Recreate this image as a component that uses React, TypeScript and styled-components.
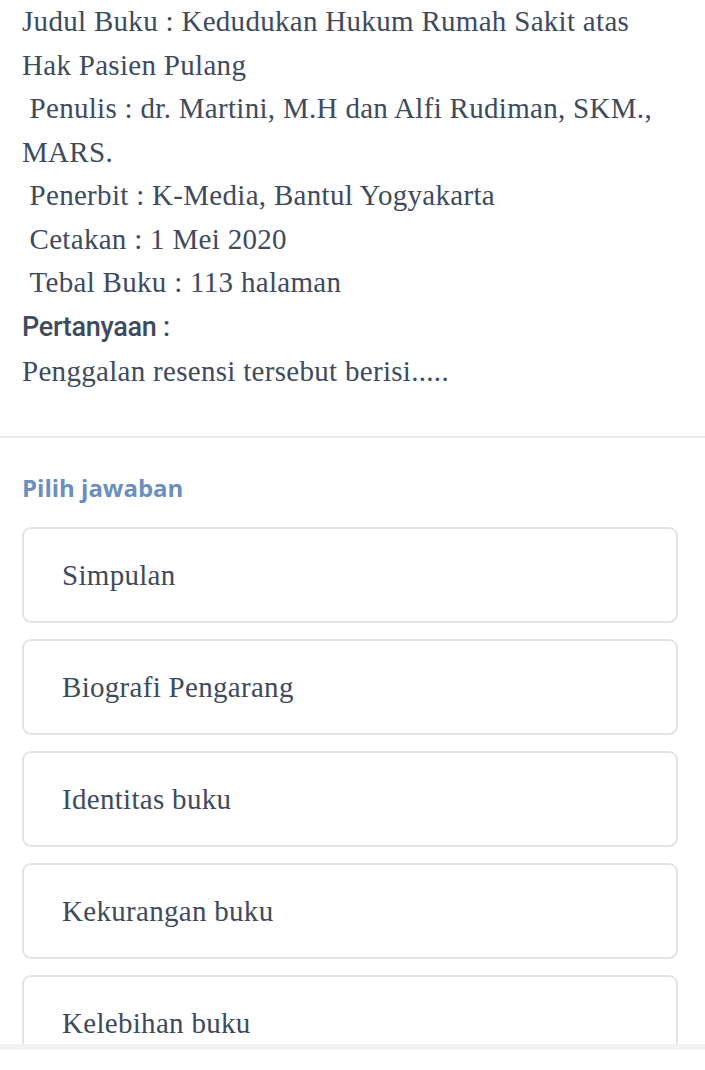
import React from "react"
import styled, { createGlobalStyle } from "styled-components"

const GlobalStyle = createGlobalStyle`
  html, body {
    margin: 0;
    padding: 0;
    background: #fff;
  }
`

const bookLines = [
  "Judul Buku : Kedudukan Hukum Rumah Sakit atas Hak Pasien Pulang",
  "\u00a0Penulis : dr. Martini, M.H dan Alfi Rudiman, SKM., MARS.",
  "\u00a0Penerbit : K-Media, Bantul Yogyakarta",
  "\u00a0Cetakan : 1 Mei 2020",
  "\u00a0Tebal Buku : 113 halaman",
]

const choices = [
  "Simpulan",
  "Biografi Pengarang",
  "Identitas buku",
  "Kekurangan buku",
  "Kelebihan buku",
]

const App = () => {
  return (
    <>
      <GlobalStyle />
      <Page>
        <Question>
          {bookLines.map(line => (
            <Line key={line}>{line}</Line>
          ))}
          <Label>Pertanyaan :</Label>
          <Line>Penggalan resensi tersebut berisi.....</Line>
        </Question>
        <Divider />
        <Answers>
          <AnswersTitle>Pilih jawaban</AnswersTitle>
          <ChoiceList>
            {choices.map(choice => (
              <Choice key={choice}>{choice}</Choice>
            ))}
          </ChoiceList>
        </Answers>
      </Page>
      <BottomBar />
    </>
  )
}

export default App

const Page = styled.div`
  padding-bottom: 80px;
  color: #3e4a5d;
`
const Question = styled.div`
  padding: 0 43px 43px 22px;
`
const Line = styled.p`
  margin: 0;
  font-family: "Liberation Serif", "DejaVu Serif", serif;
  font-size: 29px;
  line-height: 43.5px;
  letter-spacing: 0.3px;
`
const Label = styled.p`
  margin: 0;
  font-family: Roboto, "Liberation Sans", sans-serif;
  font-weight: 500;
  font-size: 27px;
  line-height: 45px;
  letter-spacing: -0.3px;
  color: #3e4a5d;
`
const Divider = styled.hr`
  margin: 0;
  border: 0;
  height: 2px;
  background: #e8e9eb;
`
const Answers = styled.div`
  padding: 29px 27px 0 22px;
`
const AnswersTitle = styled.h3`
  margin: 0 0 18px;
  font-family: "Open Sans", sans-serif;
  font-weight: 700;
  font-size: 24px;
  line-height: 42px;
  color: #6b8ebe;
`
const ChoiceList = styled.div`
  display: flex;
  flex-direction: column;
  gap: 16px;
`
const Choice = styled.div`
  display: flex;
  align-items: center;
  height: 96px;
  box-sizing: border-box;
  padding: 0 38px;
  border: 2px solid #e2e3e5;
  border-radius: 9px;
  background: #fff;
  font-family: "Liberation Serif", "DejaVu Serif", serif;
  font-size: 29px;
  letter-spacing: 0.3px;
  color: #3e4a5d;
`
const BottomBar = styled.div`
  position: fixed;
  left: 0;
  right: 0;
  bottom: 0;
  height: 20px;
  background: #fff;
  border-top: 6px solid #f1f2f3;
`
